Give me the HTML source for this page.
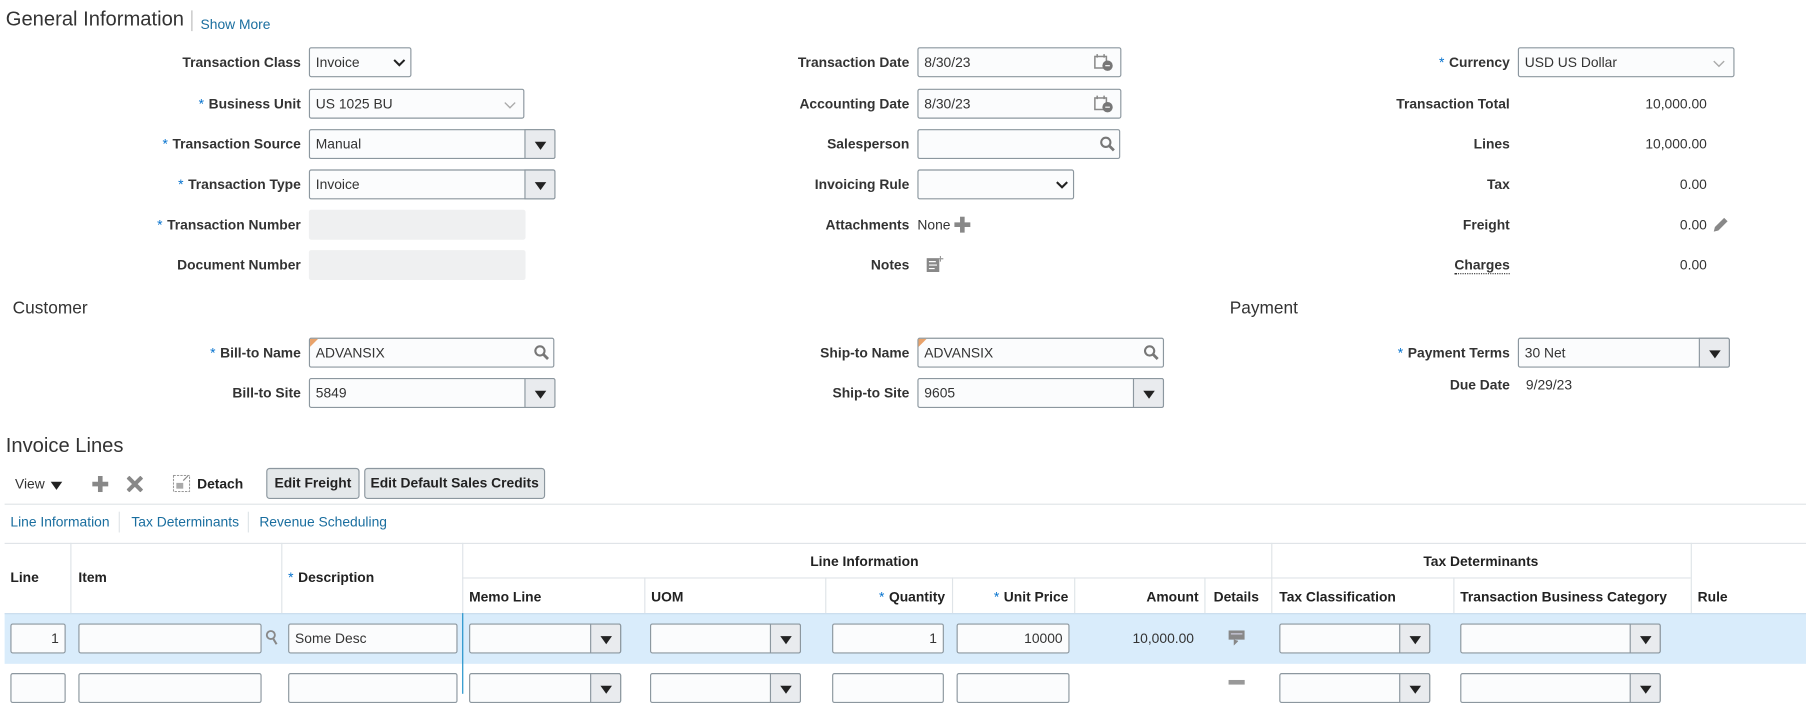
<!DOCTYPE html>
<html><head><meta charset="utf-8"><style>
*{box-sizing:border-box;margin:0;padding:0}
body{width:1806px;height:687px;overflow:hidden;background:#fff;font-family:"Liberation Sans",Arial,sans-serif;color:#333}
#w{position:absolute;left:0;top:0;width:1568px;height:600px;transform:scale(1.1525);transform-origin:0 0}
.a{position:absolute;white-space:nowrap}
.lb{position:absolute;font-size:12px;font-weight:bold;color:#333;text-align:right;white-space:nowrap;line-height:14px}
.st{color:#0572ce;font-weight:normal;margin-right:4px}
.in{position:absolute;height:26px;border:1px solid #8c979f;border-radius:2px;background:#fbfcfd;font-size:12px;line-height:24px;padding-left:5px;color:#333}
.ro{background:#eff0f1;border:1px solid #eff0f1}
.btn{position:absolute;top:-1px;right:-1px;width:27px;height:26px;border:1px solid #8c979f;border-radius:0 2px 2px 0;background:#e9ebee}
.btn:after{content:"";position:absolute;left:8px;top:10px;border-left:5px solid transparent;border-right:5px solid transparent;border-top:7px solid #222}
.val{position:absolute;font-size:12px;color:#333;line-height:14px;white-space:nowrap}
.h1{position:absolute;font-size:17.5px;color:#333}
.lnk{color:#1a6e9f}
.th{position:absolute;font-size:12px;font-weight:bold;color:#222;line-height:14px;white-space:nowrap}
.vl{position:absolute;width:1px;background:#dfe4e8}
.hl{position:absolute;height:1px;background:#dfe4e8}
.tb{position:absolute;height:27px;border:1px solid #8c979f;border-radius:3px;background:#e4e8ea;font-size:12px;font-weight:bold;line-height:25px;text-align:center;color:#222}
</style></head><body><div id="w">

<div class="h1" style="left:5px;top:6px">General Information</div>
<div class="a" style="left:166px;top:9px;width:1px;height:18px;background:#bbb"></div>
<div class="a lnk" style="left:174px;top:14px;font-size:12px">Show More</div>

<!-- col1 -->
<div class="lb" style="right:1307px;top:47px">Transaction Class</div>
<div class="in" style="left:268px;top:41px;width:89px">Invoice<svg class="a" style="left:72px;top:9px" width="11" height="7" viewBox="0 0 11 7"><path d="M1 1l4.5 4.5L10 1" stroke="#222" stroke-width="1.8" fill="none"/></svg></div>
<div class="lb" style="right:1307px;top:83px"><span class="st">*</span>Business Unit</div>
<div class="in" style="left:268px;top:77px;width:187px">US 1025 BU<svg class="a" style="left:168px;top:10px" width="11" height="7" viewBox="0 0 11 7"><path d="M1 1l4.5 4.5L10 1" stroke="#aaa" stroke-width="1.2" fill="none"/></svg></div>
<div class="lb" style="right:1307px;top:118px"><span class="st">*</span>Transaction Source</div>
<div class="in" style="left:268px;top:112px;width:214px">Manual<div class="btn"></div></div>
<div class="lb" style="right:1307px;top:153px"><span class="st">*</span>Transaction Type</div>
<div class="in" style="left:268px;top:147px;width:214px">Invoice<div class="btn"></div></div>
<div class="lb" style="right:1307px;top:188px"><span class="st">*</span>Transaction Number</div>
<div class="in ro" style="left:268px;top:182px;width:188px"></div>
<div class="lb" style="right:1307px;top:223px">Document Number</div>
<div class="in ro" style="left:268px;top:217px;width:188px"></div>

<!-- col2 -->
<div class="lb" style="right:779px;top:47px">Transaction Date</div>
<div class="in" style="left:796px;top:41px;width:177px">8/30/23<svg class="a" style="left:152px;top:4px" width="18" height="17" viewBox="0 0 18 17"><rect x="1" y="3" width="10" height="10" fill="none" stroke="#888" stroke-width="1.3"/><path d="M3 1v3M9 1v3" stroke="#888" stroke-width="1.3"/><circle cx="12" cy="11" r="4.5" fill="#777"/><path d="M10 11h4" stroke="#fff"/></svg></div>
<div class="lb" style="right:779px;top:83px">Accounting Date</div>
<div class="in" style="left:796px;top:77px;width:177px">8/30/23<svg class="a" style="left:152px;top:4px" width="18" height="17" viewBox="0 0 18 17"><rect x="1" y="3" width="10" height="10" fill="none" stroke="#888" stroke-width="1.3"/><path d="M3 1v3M9 1v3" stroke="#888" stroke-width="1.3"/><circle cx="12" cy="11" r="4.5" fill="#777"/><path d="M10 11h4" stroke="#fff"/></svg></div>
<div class="lb" style="right:779px;top:118px">Salesperson</div>
<div class="in" style="left:796px;top:112px;width:176px"><svg class="a" style="left:157px;top:5px" width="14" height="14" viewBox="0 0 14 14"><circle cx="5.5" cy="5.5" r="4" fill="none" stroke="#777" stroke-width="1.8"/><path d="M8.5 8.5l4 4" stroke="#777" stroke-width="2.4"/></svg></div>
<div class="lb" style="right:779px;top:153px">Invoicing Rule</div>
<div class="in" style="left:796px;top:147px;width:136px"><svg class="a" style="left:119px;top:9px" width="11" height="7" viewBox="0 0 11 7"><path d="M1 1l4.5 4.5L10 1" stroke="#222" stroke-width="1.8" fill="none"/></svg></div>
<div class="lb" style="right:779px;top:188px">Attachments</div>
<div class="val" style="left:796px;top:188px">None</div>
<svg class="a" style="left:828px;top:188px" width="14" height="14" viewBox="0 0 14 14"><path d="M7 0v14M0 7h14" stroke="#888" stroke-width="4"/></svg>
<div class="lb" style="right:779px;top:223px">Notes</div>
<svg class="a" style="left:804px;top:222px" width="15" height="15" viewBox="0 0 15 15"><rect x="0" y="2" width="11" height="12" fill="#888"/><path d="M2 5h6M2 8h7M2 11h5" stroke="#fff"/><path d="M12 0v5M9.5 2.5h5" stroke="#999"/></svg>

<!-- col3 -->
<div class="lb" style="right:258px;top:47px"><span class="st">*</span>Currency</div>
<div class="in" style="left:1317px;top:41px;width:188px">USD US Dollar<svg class="a" style="left:168px;top:10px" width="11" height="7" viewBox="0 0 11 7"><path d="M1 1l4.5 4.5L10 1" stroke="#aaa" stroke-width="1.2" fill="none"/></svg></div>
<div class="lb" style="right:258px;top:83px">Transaction Total</div><div class="val" style="right:87px;top:83px">10,000.00</div>
<div class="lb" style="right:258px;top:118px">Lines</div><div class="val" style="right:87px;top:118px">10,000.00</div>
<div class="lb" style="right:258px;top:153px">Tax</div><div class="val" style="right:87px;top:153px">0.00</div>
<div class="lb" style="right:258px;top:188px">Freight</div><div class="val" style="right:87px;top:188px">0.00</div>
<svg class="a" style="left:1485px;top:187px" width="16" height="16" viewBox="0 0 16 16"><path d="M2 14l1-4 8-8 3 3-8 8z" fill="#888"/></svg>
<div class="lb" style="right:258px;top:223px;border-bottom:1px dotted #333">Charges</div><div class="val" style="right:87px;top:223px">0.00</div>

<!-- customer -->
<div class="a" style="left:11px;top:259px;font-size:15px;color:#333">Customer</div>
<div class="a" style="left:1067px;top:259px;font-size:15px;color:#333">Payment</div>
<div class="lb" style="right:1307px;top:299px"><span class="st">*</span>Bill-to Name</div>
<div class="in" style="left:268px;top:293px;width:213px">ADVANSIX<div class="a" style="left:0;top:0;border-top:7px solid #e8a26a;border-right:7px solid transparent"></div><svg class="a" style="left:194px;top:5px" width="14" height="14" viewBox="0 0 14 14"><circle cx="5.5" cy="5.5" r="4" fill="none" stroke="#777" stroke-width="1.8"/><path d="M8.5 8.5l4 4" stroke="#777" stroke-width="2.4"/></svg></div>
<div class="lb" style="right:1307px;top:334px">Bill-to Site</div>
<div class="in" style="left:268px;top:328px;width:214px">5849<div class="btn"></div></div>
<div class="lb" style="right:779px;top:299px">Ship-to Name</div>
<div class="in" style="left:796px;top:293px;width:214px">ADVANSIX<div class="a" style="left:0;top:0;border-top:7px solid #e8a26a;border-right:7px solid transparent"></div><svg class="a" style="left:195px;top:5px" width="14" height="14" viewBox="0 0 14 14"><circle cx="5.5" cy="5.5" r="4" fill="none" stroke="#777" stroke-width="1.8"/><path d="M8.5 8.5l4 4" stroke="#777" stroke-width="2.4"/></svg></div>
<div class="lb" style="right:779px;top:334px">Ship-to Site</div>
<div class="in" style="left:796px;top:328px;width:214px">9605<div class="btn"></div></div>
<div class="lb" style="right:258px;top:299px"><span class="st">*</span>Payment Terms</div>
<div class="in" style="left:1317px;top:293px;width:184px">30 Net<div class="btn"></div></div>
<div class="lb" style="right:258px;top:327px">Due Date</div><div class="val" style="left:1324px;top:327px">9/29/23</div>

<!-- invoice lines -->
<div class="h1" style="left:5px;top:376px">Invoice Lines</div>
<div class="val" style="left:13px;top:413px">View</div>
<div class="a" style="left:44px;top:418px;border-left:5px solid transparent;border-right:5px solid transparent;border-top:7px solid #222"></div>
<svg class="a" style="left:80px;top:413px" width="14" height="14" viewBox="0 0 14 14"><path d="M7 0v14M0 7h14" stroke="#888" stroke-width="4"/></svg>
<svg class="a" style="left:110px;top:413px" width="14" height="14" viewBox="0 0 14 14"><path d="M1 1l12 12M13 1L1 13" stroke="#888" stroke-width="3.5"/></svg>
<svg class="a" style="left:150px;top:412px" width="15" height="15" viewBox="0 0 15 15"><rect x="0.5" y="0.5" width="14" height="14" fill="none" stroke="#999" stroke-dasharray="2 1"/><rect x="3" y="7" width="6" height="5" fill="#aaa"/><path d="M9 5l4-4" stroke="#888"/></svg>
<div class="a" style="left:171px;top:413px;font-size:12px;font-weight:bold;color:#222">Detach</div>
<div class="tb" style="left:231px;top:406px;width:81px">Edit Freight</div>
<div class="tb" style="left:316px;top:406px;width:157px">Edit Default Sales Credits</div>
<div class="hl" style="left:4px;top:437px;width:1564px"></div>
<div class="a lnk" style="left:9px;top:446px;font-size:12px">Line Information</div>
<div class="vl" style="left:103px;top:444px;height:18px"></div>
<div class="a lnk" style="left:114px;top:446px;font-size:12px">Tax Determinants</div>
<div class="vl" style="left:215px;top:444px;height:18px"></div>
<div class="a lnk" style="left:225px;top:446px;font-size:12px">Revenue Scheduling</div>

<!-- table -->
<div class="hl" style="left:4px;top:471px;width:1564px"></div>
<div class="hl" style="left:401px;top:501px;width:1066px"></div>
<div class="a" style="left:4px;top:532px;width:1564px;height:44px;background:#d9ecfb;border-top:1px solid #c8dced"></div>
<div class="vl" style="left:61px;top:471px;height:61px"></div>
<div class="vl" style="left:244px;top:471px;height:61px"></div>
<div class="vl" style="left:401px;top:471px;height:61px"></div>
<div class="a" style="left:401px;top:532px;width:1px;height:70px;background:#1b8fc9"></div>
<div class="vl" style="left:559px;top:501px;height:31px"></div>
<div class="vl" style="left:716px;top:501px;height:31px"></div>
<div class="vl" style="left:826px;top:501px;height:31px"></div>
<div class="vl" style="left:932px;top:501px;height:31px"></div>
<div class="vl" style="left:1045px;top:501px;height:31px"></div>
<div class="vl" style="left:1103px;top:471px;height:61px"></div>
<div class="vl" style="left:1261px;top:501px;height:31px"></div>
<div class="vl" style="left:1467px;top:471px;height:61px"></div>
<div class="th" style="left:9px;top:494px">Line</div>
<div class="th" style="left:68px;top:494px">Item</div>
<div class="th" style="left:250px;top:494px"><span class="st">*</span>Description</div>
<div class="th" style="left:703px;top:480px">Line Information</div>
<div class="th" style="left:1235px;top:480px">Tax Determinants</div>
<div class="th" style="left:407px;top:511px">Memo Line</div>
<div class="th" style="left:565px;top:511px">UOM</div>
<div class="th" style="right:748px;top:511px"><span class="st">*</span>Quantity</div>
<div class="th" style="right:641px;top:511px"><span class="st">*</span>Unit Price</div>
<div class="th" style="right:528px;top:511px">Amount</div>
<div class="th" style="left:1053px;top:511px">Details</div>
<div class="th" style="left:1110px;top:511px">Tax Classification</div>
<div class="th" style="left:1267px;top:511px">Transaction Business Category</div>
<div class="th" style="left:1473px;top:511px">Rule</div>

<!-- row1 -->
<div class="in" style="left:9px;top:541px;width:48px;text-align:right;padding-right:5px">1</div>
<div class="in" style="left:68px;top:541px;width:159px"></div>
<svg class="a" style="left:230px;top:546px" width="12" height="16" viewBox="0 0 12 16"><circle cx="5" cy="5" r="3.5" fill="none" stroke="#888" stroke-width="1.6"/><path d="M7 8l3 5" stroke="#888" stroke-width="1.8"/></svg>
<div class="in" style="left:250px;top:541px;width:147px">Some Desc</div>
<div class="in" style="left:407px;top:541px;width:132px"><div class="btn"></div></div>
<div class="in" style="left:564px;top:541px;width:131px"><div class="btn"></div></div>
<div class="in" style="left:722px;top:541px;width:97px;text-align:right;padding-right:5px">1</div>
<div class="in" style="left:830px;top:541px;width:98px;text-align:right;padding-right:5px">10000</div>
<div class="val" style="right:532px;top:547px">10,000.00</div>
<svg class="a" style="left:1066px;top:547px" width="14" height="13" viewBox="0 0 14 13"><rect x="0" y="0" width="14" height="8" fill="#888"/><path d="M2 3h10" stroke="#ccd"/><path d="M5 8v4l3-3" fill="#888" stroke="#888"/></svg>
<div class="in" style="left:1110px;top:541px;width:131px"><div class="btn"></div></div>
<div class="in" style="left:1267px;top:541px;width:174px"><div class="btn"></div></div>

<!-- row2 -->
<div class="in" style="left:9px;top:584px;width:48px"></div>
<div class="in" style="left:68px;top:584px;width:159px"></div>
<div class="in" style="left:250px;top:584px;width:147px"></div>
<div class="in" style="left:407px;top:584px;width:132px"><div class="btn"></div></div>
<div class="in" style="left:564px;top:584px;width:131px"><div class="btn"></div></div>
<div class="in" style="left:722px;top:584px;width:97px"></div>
<div class="in" style="left:830px;top:584px;width:98px"></div>
<div class="a" style="left:1066px;top:590px;width:14px;height:4px;background:#999"></div>
<div class="in" style="left:1110px;top:584px;width:131px"><div class="btn"></div></div>
<div class="in" style="left:1267px;top:584px;width:174px"><div class="btn"></div></div>
</div></body></html>
